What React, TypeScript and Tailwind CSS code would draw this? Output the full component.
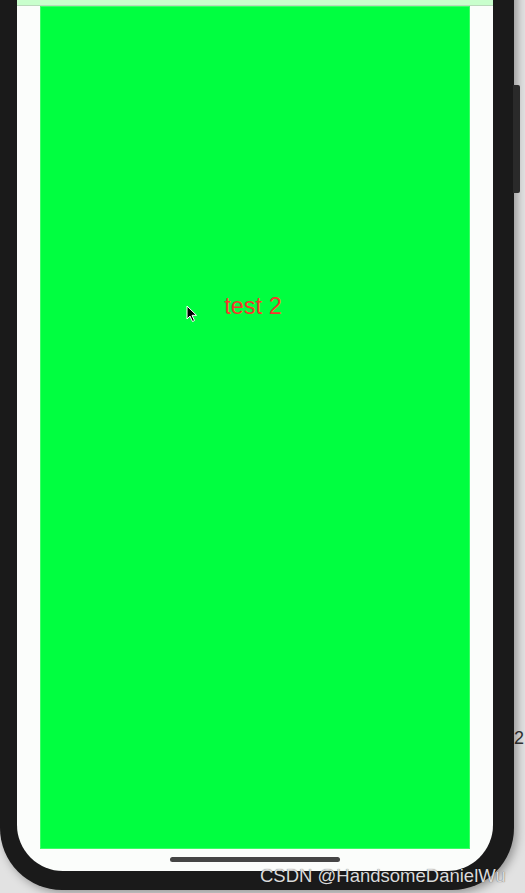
export default function App() {
  return (
    <div
      className="relative flex h-[893px] w-[525px] overflow-hidden bg-[#e2e2e2]"
      style={{ fontFamily: '"Liberation Sans", Arial, sans-serif' }}
    >
      {/* phone frame */}
      <div className="relative -mt-[40px] flex h-[930px] w-[514px] flex-shrink-0 flex-col rounded-b-[62px] bg-[#1a1a1a] pb-[19px] pl-[17px] pr-[21px] shadow-[3px_3px_10px_rgba(0,0,0,0.35)]">
        {/* side button */}
        <div className="absolute right-[-6px] top-[125px] h-[108px] w-[7px] rounded-r-[2px] bg-[#2a2a2a]" />
        {/* screen */}
        <div className="flex flex-1 flex-col rounded-b-[46px] bg-[#fbfdfb] pt-[40px]">
          <div className="h-[6px] border-b border-[#b9d9bb] bg-[#c9ffcd]" />
          <div className="relative mx-[23px] flex h-[843px] justify-center border border-[#3cff66] bg-[#00ff40] pr-[4px] pt-[285px]">
            <span className="text-[23.5px] leading-[28px] text-[#f5382c]">test 2</span>
            {/* cursor */}
            <svg
              className="absolute left-[145px] top-[298px]"
              width="12"
              height="18"
              viewBox="0 0 12 18"
            >
              <path
                d="M1 1 L1 14 L4 11 L6.5 16.5 L8.5 15.6 L6 10.3 L10.5 10.3 Z"
                fill="#000"
                stroke="#fff"
                strokeWidth="1"
                strokeLinejoin="round"
              />
            </svg>
          </div>
          <div className="mt-[8px] h-[5px] w-[170px] self-center rounded-full bg-[#454545]" />
        </div>
      </div>
      {/* edge of next item */}
      <div className="flex-1 pt-[727px] text-[18px] leading-[22px] text-[#333]">2</div>
      {/* watermark */}
      <div className="absolute left-[260px] top-[865px] whitespace-nowrap text-[18.5px] leading-[22px] text-[#dadada] [text-shadow:0_0_1px_rgba(0,0,0,0.6)]">
        CSDN @HandsomeDanielWu
      </div>
    </div>
  );
}
